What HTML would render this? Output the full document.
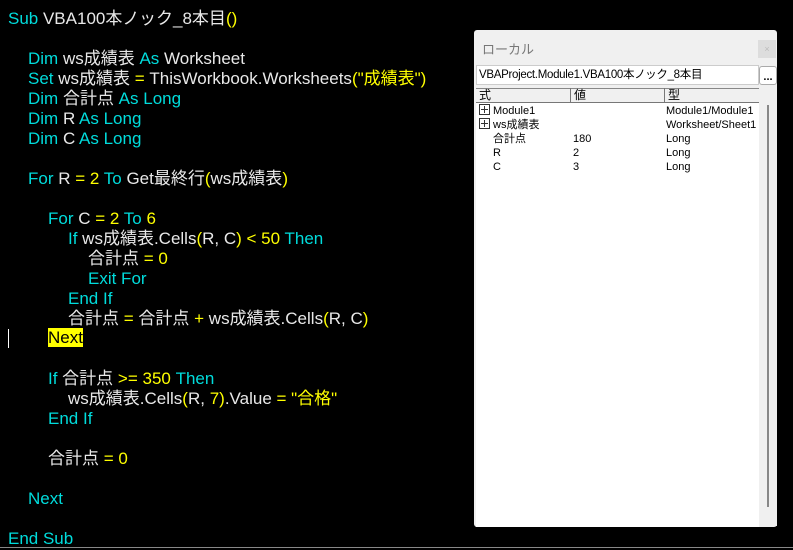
<!DOCTYPE html>
<html><head><meta charset="utf-8">
<style>
html,body{margin:0;padding:0;background:#000;width:793px;height:550px;overflow:hidden;position:relative}
.code{position:absolute;left:0;top:0;font-family:"Liberation Sans","Noto Sans CJK JP",sans-serif;font-size:17px;color:#e8e8e8}
.l{position:absolute;height:20px;line-height:20px;white-space:pre}
.k{color:#00dcdc}.y{color:#ffff00}
.hl{background:#ffff00;color:#000}
.cur{position:absolute;left:8px;top:329px;width:1px;height:19px;background:#fff}
.bot{position:absolute;left:0;top:547px;width:793px;height:1px;background:#888}
.panel{position:absolute;left:474px;top:30px;width:303px;height:497px;background:#f0f0f0;border-radius:3px;font-family:"Liberation Sans","Noto Sans CJK JP",sans-serif;font-size:11px;color:#000}
.title{position:absolute;left:8px;top:9px;font-size:13px;color:#777}
.x{position:absolute;left:284px;top:10px;width:18px;height:18px;background:#ddd;color:#bbb;font-size:9px;text-align:center;line-height:18px}
.combo{position:absolute;left:2px;top:35px;width:279px;height:18px;background:#fff;border:1px solid #ccc;line-height:18px;padding-left:2px;font-size:11.5px;letter-spacing:-0.3px}
.dots{position:absolute;left:285px;top:36px;width:16px;height:17px;background:#fff;border:1px solid #aaa;border-radius:3px;font-size:11px;font-weight:bold;text-align:center;line-height:20px}
.list{position:absolute;left:2px;top:58px;width:283px;height:438px;background:#fff;border-top:1px solid #888}
.hdr{position:absolute;left:0;top:0;width:283px;height:13px;background:#f0f0f0;border-bottom:1px solid #777}
.hc{position:absolute;top:-1px;height:14px;line-height:14px;padding-left:3px;border-right:1px solid #777;font-size:12px}
.r{position:absolute;height:14px;line-height:14px;white-space:nowrap}
.pl{display:inline-block;width:9px;height:9px;border:1px solid #333;position:relative;vertical-align:-1px;margin-right:3px}
.pl:before{content:"";position:absolute;left:1px;top:4px;width:7px;height:1px;background:#333}
.pl:after{content:"";position:absolute;left:4px;top:1px;width:1px;height:7px;background:#333}
.sb{position:absolute;left:286px;top:58px;width:17px;height:438px;background:#f0f0f0}
.thumb{position:absolute;left:7px;top:17px;width:2px;height:402px;background:#888}
</style></head><body>
<div class="code">
<div class="l" style="left:8px;top:9px"><span class="k">Sub</span> VBA100本ノック_8本目<span class="y">()</span></div>
<div class="l" style="left:28px;top:49px"><span class="k">Dim</span> ws成績表 <span class="k">As</span> Worksheet</div>
<div class="l" style="left:28px;top:69px"><span class="k">Set</span> ws成績表 <span class="y">=</span> ThisWorkbook.Worksheets<span class="y">("成績表")</span></div>
<div class="l" style="left:28px;top:89px"><span class="k">Dim</span> 合計点 <span class="k">As Long</span></div>
<div class="l" style="left:28px;top:109px"><span class="k">Dim</span> R <span class="k">As Long</span></div>
<div class="l" style="left:28px;top:129px"><span class="k">Dim</span> C <span class="k">As Long</span></div>
<div class="l" style="left:28px;top:169px"><span class="k">For</span> R <span class="y">= 2</span> <span class="k">To</span> Get最終行<span class="y">(</span>ws成績表<span class="y">)</span></div>
<div class="l" style="left:48px;top:209px"><span class="k">For</span> C <span class="y">= 2</span> <span class="k">To</span> <span class="y">6</span></div>
<div class="l" style="left:68px;top:229px"><span class="k">If</span> ws成績表.Cells<span class="y">(</span>R, C<span class="y">) &lt; 50</span> <span class="k">Then</span></div>
<div class="l" style="left:88px;top:249px">合計点 <span class="y">= 0</span></div>
<div class="l" style="left:88px;top:269px"><span class="k">Exit For</span></div>
<div class="l" style="left:68px;top:289px"><span class="k">End If</span></div>
<div class="l" style="left:68px;top:309px">合計点 <span class="y">=</span> 合計点 <span class="y">+</span> ws成績表.Cells<span class="y">(</span>R, C<span class="y">)</span></div>
<div class="l" style="left:48px;top:328px"><span class="hl">Next</span></div>
<div class="l" style="left:48px;top:369px"><span class="k">If</span> 合計点 <span class="y">&gt;= 350</span> <span class="k">Then</span></div>
<div class="l" style="left:68px;top:389px">ws成績表.Cells<span class="y">(</span>R, <span class="y">7)</span>.Value <span class="y">= "合格"</span></div>
<div class="l" style="left:48px;top:409px"><span class="k">End If</span></div>
<div class="l" style="left:48px;top:449px">合計点 <span class="y">= 0</span></div>
<div class="l" style="left:28px;top:489px"><span class="k">Next</span></div>
<div class="l" style="left:8px;top:529px"><span class="k">End Sub</span></div>
</div>
<div class="cur"></div>
<div class="bot"></div>
<div class="panel">
<div class="title">ローカル</div>
<div class="x">×</div>
<div class="combo">VBAProject.Module1.VBA100本ノック_8本目</div>
<div class="dots">...</div>
<div class="list">
<div class="hdr">
<div class="hc" style="left:0;width:91px">式</div>
<div class="hc" style="left:95px;width:90px">値</div>
<div class="hc" style="left:189px;width:90px;border-right:none">型</div>
</div>
<div class="r" style="left:3px;top:15px"><span class="pl"></span>Module1</div>
<div class="r" style="left:190px;top:15px">Module1/Module1</div>
<div class="r" style="left:3px;top:29px"><span class="pl"></span>ws成績表</div>
<div class="r" style="left:190px;top:29px">Worksheet/Sheet1</div>
<div class="r" style="left:17px;top:43px">合計点</div><div class="r" style="left:97px;top:43px">180</div><div class="r" style="left:190px;top:43px">Long</div>
<div class="r" style="left:17px;top:57px">R</div><div class="r" style="left:97px;top:57px">2</div><div class="r" style="left:190px;top:57px">Long</div>
<div class="r" style="left:17px;top:71px">C</div><div class="r" style="left:97px;top:71px">3</div><div class="r" style="left:190px;top:71px">Long</div>
</div>
<div class="sb"><div class="thumb"></div></div>
</div>
</body></html>
